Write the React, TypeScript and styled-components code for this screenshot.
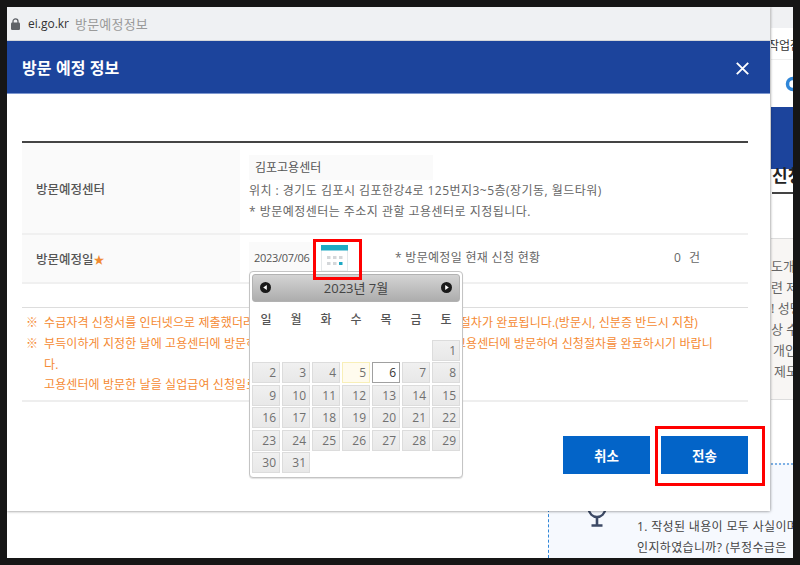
import React from "react";
import styled, { createGlobalStyle } from "styled-components";

const Global = createGlobalStyle`
  html, body { margin: 0; padding: 0; background: #161616; }
  body { font-family: "Open Sans", "Noto Sans CJK KR", sans-serif; }
  * { box-sizing: border-box; }
`;

const Frame = styled.div`
  width: 800px;
  height: 565px;
  padding: 7px;
  background: #161616;
`;
const Desktop = styled.div`
  position: relative;
  width: 786px;
  height: 551px;
  background: #fff;
  overflow: hidden;
`;
const BackPage = styled.div`
  display: flex;
  flex-direction: column;
  height: 100%;
`;
const BackTop = styled.div`
  display: flex;
  justify-content: flex-end;
  height: 456px;
`;
const Rail = styled.div`
  display: flex;
  flex-direction: column;
  width: 22px;
  overflow: hidden;
  white-space: nowrap;
`;
const RailGray = styled.div`
  height: 21px;
  background: #f0f1f3;
`;
const RailUtility = styled.div`
  height: 32px;
  padding-top: 2px;
  font-size: 12px;
  line-height: 32px;
  color: #333;
  border-bottom: 1px solid #eee;
  margin-left: -3px;
`;
const RailIconRow = styled.div`
  display: flex;
  align-items: center;
  height: 47px;
  padding: 0 0 0 14px;
`;
const RailBlue = styled.div`
  height: 62px;
  background: #1c449c;
`;
const RailHeading = styled.div`
  height: 27px;
  font-size: 17px;
  font-weight: 700;
  line-height: 18px;
  color: #222;
  border-bottom: 2px solid #444;
  margin-left: 1px;
  margin-top: -2px;
`;
const RailNotice = styled.div`
  height: 162px;
  margin-top: 44px;
  padding-top: 17px;
  background: #f8f6f4;
  border-top: 1px solid #ddd;
  border-bottom: 1px solid #ddd;
  font-size: 13px;
  line-height: 21px;
  color: #666;
`;
const NoticeLine = styled.div<{ $shift?: number }>`
  padding-left: ${(p) => p.$shift ?? 0}px;
`;
const BackPanel = styled.div`
  display: flex;
  flex: 1;
  margin-left: 541px;
  background: #f6f9fe;
  border-left: 1px dashed #2f86d8;
  border-top: 2px dotted #7fb2e6;
  padding: 36px 0 0 37px;
  white-space: nowrap;
  overflow: hidden;
`;
const CupIcon = styled.svg`
  flex: none;
  width: 22px;
  height: 26px;
`;
const PanelText = styled.div`
  margin: 15px 0 0 29px;
  font-size: 12px;
  line-height: 21px;
  letter-spacing: 0.35px;
  color: #444;
`;

const PopupWindow = styled.div`
  position: absolute;
  left: 0;
  top: 0;
  display: flex;
  flex-direction: column;
  width: 763px;
  height: 504px;
  background: #fff;
  box-shadow: 0 0 3px rgba(0, 0, 0, 0.55);
`;
const AddressBar = styled.div`
  display: flex;
  align-items: center;
  flex: none;
  height: 34px;
  padding-left: 4px;
  background: #eff1f3;
  border-bottom: 1px solid #d4d6da;
  font-size: 12px;
`;
const LockIcon = styled.svg`
  width: 9px;
  height: 12px;
  margin-right: 8px;
  margin-top: 1px;
`;
const Domain = styled.span`
  color: #333;
`;
const PageName = styled.span`
  margin-left: 6px;
  font-size: 13px;
  color: #9a9a9a;
  letter-spacing: 0.2px;
`;
const DialogHeader = styled.div`
  display: flex;
  align-items: center;
  justify-content: space-between;
  flex: none;
  height: 53px;
  padding: 0 21px 0 15px;
  background: #1c449c;
  border-bottom: 1px solid #7d97cf;
`;
const DialogTitle = styled.h1`
  margin: 0;
  font-size: 16px;
  font-weight: 700;
  color: #fff;
  letter-spacing: 0.1px;
`;
const CloseIcon = styled.svg`
  width: 13px;
  height: 13px;
  margin-top: 3px;
`;
const DialogBody = styled.div`
  display: flex;
  flex-direction: column;
  padding: 47px 22px 0 15px;
`;
const FormTable = styled.div`
  display: grid;
  grid-template-columns: 218px 1fr;
  border-top: 2px solid #444;
`;
const LabelCell = styled.div<{ $height: number }>`
  display: flex;
  align-items: center;
  height: ${(p) => p.$height}px;
  padding-left: 14px;
  background: #fafafa;
  border-bottom: 2px solid #f0f0f0;
  font-size: 12.5px;
  font-weight: 500;
  color: #555;
`;
const Star = styled.span`
  font-size: 11px;
  color: #f08a32;
`;
const ValueCell = styled.div<{ $height: number }>`
  height: ${(p) => p.$height}px;
  padding-left: 9px;
  border-bottom: 2px solid #f0f0f0;
  font-size: 12px;
  color: #666;
`;
const CenterBox = styled.div`
  width: 184px;
  height: 25px;
  margin-top: 12px;
  padding-left: 6px;
  background: #fafafa;
  font-size: 12px;
  line-height: 25px;
  color: #555;
`;
const InfoLine = styled.div`
  height: 21px;
  line-height: 21px;
  letter-spacing: 0.47px;
`;
const DateRow = styled.div`
  position: relative;
  display: flex;
  align-items: flex-start;
  height: 45px;
  padding-top: 4px;
`;
const DateValue = styled.div`
  flex: none;
  width: 64px;
  height: 31px;
  margin-top: 3px;
  padding-left: 5px;
  background: #fafafa;
  font-size: 11px;
  letter-spacing: -0.3px;
  line-height: 31px;
  color: #555;
  white-space: nowrap;
`;
const PickerButton = styled.div`
  position: relative;
  flex: none;
  width: 49px;
  height: 41px;
  padding: 6px 0 0 8px;
  &::after {
    content: "";
    position: absolute;
    z-index: 3;
    inset: 0;
    border: 3px solid #f00;
  }
`;
const CalendarIcon = styled.svg`
  display: block;
  width: 27px;
  height: 26px;
`;
const StatusLabel = styled.div`
  margin: 8px 0 0 33px;
  width: 279px;
  line-height: 21px;
  letter-spacing: 0.3px;
`;
const StatusCount = styled.div`
  margin-top: 8px;
  line-height: 21px;
  word-spacing: 5px;
`;

const CalendarPopup = styled.div`
  position: absolute;
  z-index: 2;
  left: 0;
  top: 36px;
  width: 214px;
  height: 207px;
  padding: 2px;
  background: #fff;
  border: 1px solid #c4c4c4;
  border-radius: 4px;
  box-shadow: 0 1px 1px rgba(0, 0, 0, 0.12);
`;
const CalendarHeader = styled.div`
  display: flex;
  align-items: center;
  justify-content: space-between;
  height: 28px;
  padding: 0 7px 1px 7px;
  background: linear-gradient(#d4d4d4, #adadad);
  border: 1px solid #b2b2b2;
  border-radius: 3px;
  font-size: 13px;
  color: #444;
`;
const NavIcon = styled.svg`
  width: 11px;
  height: 11px;
`;
const WeekRow = styled.div`
  display: grid;
  grid-template-columns: repeat(7, 28px);
  column-gap: 2px;
  height: 38px;
  font-size: 12px;
  font-weight: 500;
  line-height: 36px;
  text-align: center;
  color: #555;
`;
const DayGrid = styled.div`
  display: grid;
  grid-template-columns: repeat(7, 28px);
  grid-auto-rows: 21px;
  column-gap: 2px;
  row-gap: 1.4px;
`;
const DayCell = styled.div<{ $kind?: "today" | "selected" }>`
  padding-right: 3px;
  font-size: 12px;
  line-height: 20px;
  text-align: right;
  color: ${(p) => (p.$kind === "selected" ? "#333" : "#707070")};
  border: 1px solid
    ${(p) => (p.$kind === "today" ? "#f8efb8" : p.$kind === "selected" ? "#a0a0a0" : "#dcdcdc")};
  background: ${(p) =>
    p.$kind === "today"
      ? "#fffbee"
      : p.$kind === "selected"
        ? "#fff"
        : "linear-gradient(#f0f0f0, #e8e8e8)"};
`;
const EmptyCell = styled.div``;

const Notes = styled.div`
  margin-top: 23px;
  padding: 5px 0 4px;
  border-top: 1px solid #ddd;
  border-bottom: 2px solid #eee;
  font-size: 12px;
  line-height: 20.8px;
  letter-spacing: 0.1px;
  color: #f58a33;
`;
const NoteItem = styled.div`
  display: flex;
  white-space: nowrap;
`;
const NoteMark = styled.span`
  flex: none;
  width: 22px;
  padding-left: 4px;
`;
const Actions = styled.div`
  display: flex;
  justify-content: flex-end;
  gap: 11px;
  margin-top: 34px;
`;
const ActionButton = styled.button<{ $flagged?: boolean }>`
  position: relative;
  width: 87px;
  height: 38px;
  padding: 0;
  background: #0364c8;
  border: 0;
  font-family: inherit;
  font-size: 13.5px;
  font-weight: 700;
  color: #fff;
  &::after {
    content: ${(p) => (p.$flagged ? '""' : "none")};
    position: absolute;
    inset: -10px -17px -12px -6px;
    border: 3px solid #f00;
  }
`;

const leading = Array.from({ length: 6 });
const days = Array.from({ length: 31 }, (_, i) => i + 1);
const kindOf = (d: number) => (d === 5 ? "today" : d === 6 ? "selected" : undefined);

export default function App() {
  return (
    <Frame>
      <Global />
      <Desktop>
        <BackPage>
          <BackTop>
            <Rail>
              <RailGray />
              <RailUtility>작업참</RailUtility>
              <RailIconRow>
                <svg width="16" height="16" viewBox="0 0 16 16" style={{ flex: "none" }}>
                  <circle cx="8" cy="8" r="5.5" fill="none" stroke="#2f86d8" strokeWidth="3.5" />
                </svg>
              </RailIconRow>
              <RailBlue />
              <RailHeading>신청</RailHeading>
              <RailNotice>
                <NoticeLine>도개</NoticeLine>
                <NoticeLine>련 제</NoticeLine>
                <NoticeLine>! 성명</NoticeLine>
                <NoticeLine>상 수</NoticeLine>
                <NoticeLine $shift={2}>개인</NoticeLine>
                <NoticeLine $shift={3}>제도</NoticeLine>
              </RailNotice>
            </Rail>
          </BackTop>
          <BackPanel>
            <CupIcon viewBox="0 0 22 26">
              <path d="M2 6c1 7 5 10 9 10s8-3 9-10" fill="none" stroke="#3d4a66" strokeWidth="2.4" />
              <path d="M11 16v8M5.5 24.5h11" fill="none" stroke="#3d4a66" strokeWidth="2.6" />
            </CupIcon>
            <PanelText>
              1. 작성된 내용이 모두 사실이며
              <br />
              인지하였습니까? (부정수급은
            </PanelText>
          </BackPanel>
        </BackPage>

        <PopupWindow>
          <AddressBar>
            <LockIcon viewBox="0 0 9 12">
              <path d="M2 5V3.4a2.5 2.5 0 0 1 5 0V5" fill="none" stroke="#5f6368" strokeWidth="1.3" />
              <rect x="0" y="4.6" width="9" height="7.4" rx="1.2" fill="#5f6368" />
            </LockIcon>
            <Domain>ei.go.kr</Domain>
            <PageName>방문예정정보</PageName>
          </AddressBar>
          <DialogHeader>
            <DialogTitle>방문 예정 정보</DialogTitle>
            <CloseIcon viewBox="0 0 13 13">
              <path d="M0.8 0.8l11.4 11.4M12.2 0.8L0.8 12.2" stroke="#fff" strokeWidth="1.9" fill="none" />
            </CloseIcon>
          </DialogHeader>
          <DialogBody>
            <FormTable>
              <LabelCell $height={92}>방문예정센터</LabelCell>
              <ValueCell $height={92}>
                <CenterBox>김포고용센터</CenterBox>
                <InfoLine>위치 : 경기도 김포시 김포한강4로 125번지3~5층(장기동, 월드타워)</InfoLine>
                <InfoLine>* 방문예정센터는 주소지 관할 고용센터로 지정됩니다.</InfoLine>
              </ValueCell>
              <LabelCell $height={49}>
                방문예정일<Star>★</Star>
              </LabelCell>
              <ValueCell $height={49}>
                <DateRow>
                  <DateValue>2023/07/06</DateValue>
                  <PickerButton>
                    <CalendarIcon viewBox="0 0 27 26">
                      <rect x="0.5" y="0" width="26" height="26" fill="#fff" stroke="#e4e8ea" />
                      <rect x="0" y="0" width="27" height="5.5" fill="#1fa9c4" />
                      <g fill="#d4d7da">
                        <rect x="6" y="11" width="3.5" height="3" />
                        <rect x="12" y="11" width="3.5" height="3" />
                        <rect x="18" y="11" width="3.5" height="3" />
                        <rect x="6" y="17" width="3.5" height="3" />
                        <rect x="12" y="17" width="3.5" height="3" />
                      </g>
                      <rect x="18" y="17" width="3.5" height="3" fill="#1fa9c4" />
                    </CalendarIcon>
                  </PickerButton>
                  <StatusLabel>* 방문예정일 현재 신청 현황</StatusLabel>
                  <StatusCount>0 건</StatusCount>
                  <CalendarPopup>
                    <CalendarHeader>
                      <NavIcon viewBox="0 0 11 11">
                        <circle cx="5.5" cy="5.5" r="5.5" fill="#1a1a1a" />
                        <path d="M3.2 5.5L6.8 3v5z" fill="#fff" />
                      </NavIcon>
                      <span>2023년 7월</span>
                      <NavIcon viewBox="0 0 11 11">
                        <circle cx="5.5" cy="5.5" r="5.5" fill="#1a1a1a" />
                        <path d="M7.8 5.5L4.2 3v5z" fill="#fff" />
                      </NavIcon>
                    </CalendarHeader>
                    <WeekRow>
                      {["일", "월", "화", "수", "목", "금", "토"].map((d) => (
                        <span key={d}>{d}</span>
                      ))}
                    </WeekRow>
                    <DayGrid>
                      {leading.map((_, i) => (
                        <EmptyCell key={i} />
                      ))}
                      {days.map((d) => (
                        <DayCell key={d} $kind={kindOf(d)}>
                          {d}
                        </DayCell>
                      ))}
                    </DayGrid>
                  </CalendarPopup>
                </DateRow>
              </ValueCell>
            </FormTable>
            <Notes>
              <NoteItem>
                <NoteMark>※</NoteMark>
                <span>수급자격 신청서를 인터넷으로 제출했더라도 지정한 날에 고용센터에 방문해야 신청절차가 완료됩니다.(방문시, 신분증 반드시 지참)</span>
              </NoteItem>
              <NoteItem>
                <NoteMark>※</NoteMark>
                <span>
                  부득이하게 지정한 날에 고용센터에 방문하지 못하는 경우에는 반드시 다른 날짜에 고용센터에 방문하여 신청절차를 완료하시기 바랍니
                  <br />
                  다.
                  <br />
                  고용센터에 방문한 날을 실업급여 신청일로 봅니다.
                </span>
              </NoteItem>
            </Notes>
            <Actions>
              <ActionButton>취소</ActionButton>
              <ActionButton $flagged>전송</ActionButton>
            </Actions>
          </DialogBody>
        </PopupWindow>
      </Desktop>
    </Frame>
  );
}
